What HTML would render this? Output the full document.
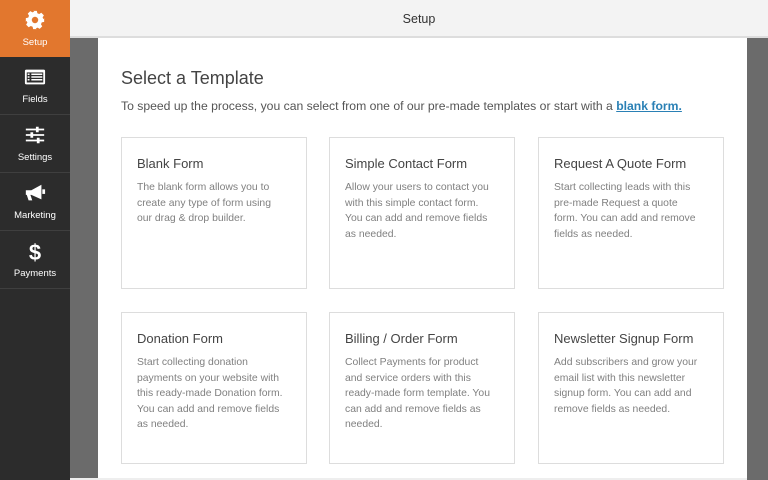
<!DOCTYPE html>
<html><head><style>
*{margin:0;padding:0;box-sizing:border-box}
body{width:768px;height:480px;overflow:hidden;background:#6b6b6b;font-family:"Liberation Sans",sans-serif;position:relative}
.side{position:absolute;left:0;top:0;width:70px;height:480px;background:#2c2c2c}
.it{height:58px;border-bottom:1px solid #3f3f3f;color:#fff;font-size:9.5px;text-align:center;position:relative}
.it.act{background:#e2772e;border:none;height:57px}
.it svg{position:absolute;left:24px;top:9px}
.it span{position:absolute;left:0;right:0;top:37px}
.hdr{position:absolute;left:70px;top:0;right:0;height:38px;background:#f3f3f3;border-bottom:2px solid #ddd;text-align:center;font-size:12.5px;color:#333;line-height:38px}
.main{position:absolute;left:98px;top:38px;width:649px;height:440px;background:#fff}
.bot{position:absolute;left:70px;top:478px;width:677px;height:2px;background:#eee}
h1{position:absolute;left:23px;top:30px;font-size:18px;font-weight:normal;color:#444}
.sub{position:absolute;left:23px;top:61px;font-size:12.2px;color:#555;white-space:nowrap}
.sub a{color:#2a80b5;font-weight:bold;text-decoration:underline}
.card{position:absolute;width:186px;height:152px;border:1px solid #ddd}
.card h3{position:absolute;left:15px;top:18px;font-size:13px;font-weight:normal;color:#444;white-space:nowrap}
.card p{position:absolute;left:15px;top:42px;white-space:nowrap;font-size:10.4px;line-height:15.5px;color:#808080}
</style></head><body>
<div class="side">
<div class="it act"><svg width="22" height="22" viewBox="0 0 24 24"><path fill="#fff" d="M10 2h4l.6 2.6 2 .9 2.3-1.4 2.8 2.8-1.4 2.3.9 2L22 10v4l-2.6.6-.9 2 1.4 2.3-2.8 2.8-2.3-1.4-2 .9L14 22h-4l-.6-2.6-2-.9-2.3 1.4-2.8-2.8 1.4-2.3-.9-2L2 14v-4l2.6-.6.9-2-1.4-2.3 2.8-2.8 2.3 1.4 2-.9z"/><circle cx="12" cy="12" r="3.5" fill="#e2772e"/></svg><span>Setup</span></div>
<div class="it"><svg width="22" height="22" viewBox="0 0 24 24"><rect x="1" y="4" width="22" height="16" rx="1.5" fill="#fff"/><rect x="3" y="7" width="18" height="11" fill="#2c2c2c"/><path d="M4 9h2M8 9h12M4 12h2M8 12h12M4 15h2M8 15h12" stroke="#fff" stroke-width="1.6"/></svg><span>Fields</span></div>
<div class="it"><svg width="22" height="22" viewBox="0 0 24 24"><path d="M2 6h20M2 12h20M2 18h20" stroke="#fff" stroke-width="2"/><rect x="13" y="3" width="3" height="6" fill="#fff"/><rect x="7" y="9" width="3" height="6" fill="#fff"/><rect x="14" y="15" width="3" height="6" fill="#fff"/></svg><span>Settings</span></div>
<div class="it"><svg width="22" height="22" viewBox="0 0 24 24"><path fill="#fff" d="M2 9h6l11-6v16L8 14H7l2 6H5l-2-6H2z"/><rect x="20" y="8" width="3" height="5" fill="#fff"/></svg><span>Marketing</span></div>
<div class="it"><svg width="22" height="24" viewBox="0 0 24 26"><text x="12" y="22" text-anchor="middle" font-size="24" font-weight="bold" fill="#fff" font-family="Liberation Sans">$</text></svg><span>Payments</span></div>
</div>
<div class="hdr">Setup</div>
<div class="main">
<h1>Select a Template</h1>
<div class="sub">To speed up the process, you can select from one of our pre-made templates or start with a <a>blank form.</a></div>
<div class="card" style="left:23px;top:99px"><h3>Blank Form</h3><p>The blank form allows you to<br>create any type of form using<br>our drag &amp; drop builder.</p></div>
<div class="card" style="left:231px;top:99px"><h3>Simple Contact Form</h3><p>Allow your users to contact you<br>with this simple contact form.<br>You can add and remove fields<br>as needed.</p></div>
<div class="card" style="left:440px;top:99px"><h3>Request A Quote Form</h3><p>Start collecting leads with this<br>pre-made Request a quote<br>form. You can add and remove<br>fields as needed.</p></div>
<div class="card" style="left:23px;top:274px"><h3>Donation Form</h3><p>Start collecting donation<br>payments on your website with<br>this ready-made Donation form.<br>You can add and remove fields<br>as needed.</p></div>
<div class="card" style="left:231px;top:274px"><h3>Billing / Order Form</h3><p>Collect Payments for product<br>and service orders with this<br>ready-made form template. You<br>can add and remove fields as<br>needed.</p></div>
<div class="card" style="left:440px;top:274px"><h3>Newsletter Signup Form</h3><p>Add subscribers and grow your<br>email list with this newsletter<br>signup form. You can add and<br>remove fields as needed.</p></div>
</div>
<div class="bot"></div>
</body></html>
